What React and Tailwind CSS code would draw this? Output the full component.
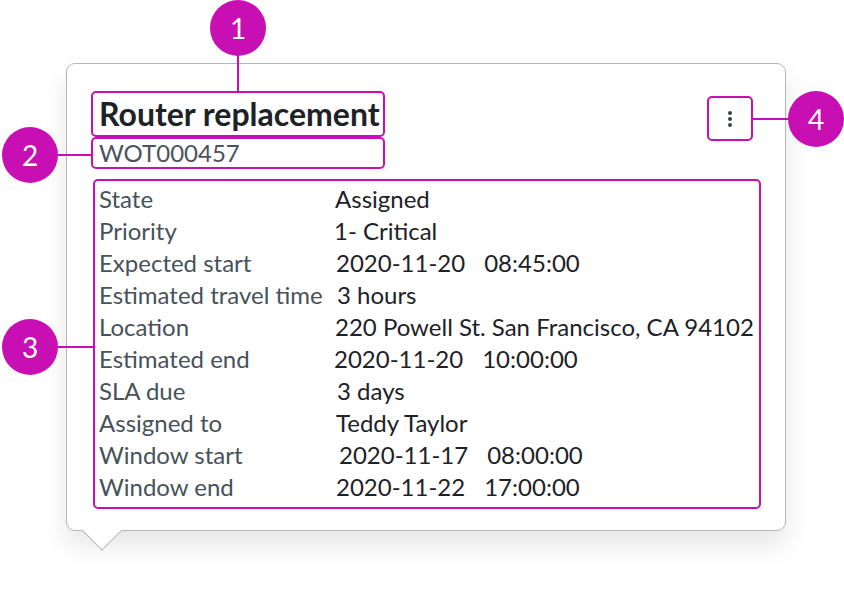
import React from 'react';

const ROWS = [
  ['State', 'Assigned', 'ml-0'],
  ['Priority', '1- Critical', 'ml-[-1px]'],
  ['Expected start', ['2020-11-20', '08:45:00'], 'ml-[1px]'],
  ['Estimated travel time', '3 hours', 'ml-[2px]'],
  ['Location', '220 Powell St. San Francisco, CA 94102', 'ml-0'],
  ['Estimated end', ['2020-11-20', '10:00:00'], 'ml-[-1px]'],
  ['SLA due', '3 days', 'ml-[2px]'],
  ['Assigned to', 'Teddy Taylor', 'ml-[1px]'],
  ['Window start', ['2020-11-17', '08:00:00'], 'ml-[4px]'],
  ['Window end', ['2020-11-22', '17:00:00'], 'ml-[1px]'],
];

function Callout({ n, className }) {
  return (
    <div
      className={`absolute w-[56px] h-[56px] rounded-full bg-[#c80fb4] text-white flex items-center justify-center text-[28px] leading-none ${className}`}
    >
      {n}
    </div>
  );
}

export default function App() {
  return (
    <div
      className="relative w-[844px] h-[592px] bg-white overflow-hidden"
      style={{ fontFamily: 'Lato, "Noto Sans", sans-serif' }}
    >
      {/* card */}
      <div className="absolute left-[66px] top-[63px] w-[720px] h-[468px]">
        <div className="relative w-full h-full bg-white border border-[#b3b8bc] rounded-[9px] shadow-[0_14px_26px_rgba(0,0,0,0.10)] pt-[27px] pl-[24px] pr-[32px]">
          {/* tail */}
          <div className="absolute left-[21px] bottom-[-15px] w-[28px] h-[28px] rotate-45 bg-white border-r border-b border-[#b3b8bc]" />

          <div className="relative flex justify-between items-start">
            <div className="flex flex-col w-[294px]">
              <div className="h-[46px] border-2 border-[#c80fb4] rounded-[5px] px-[6px] flex items-center">
                <span className="text-[32px] font-bold text-[#1d2226] leading-none whitespace-nowrap">Router replacement</span>
              </div>
              <div className="h-[32px] border-2 border-[#c80fb4] rounded-[5px] px-[6px] flex items-center">
                <span className="text-[24px] text-[#4a545c] leading-none">WOT000457</span>
              </div>
            </div>
            <div className="mt-[5px] w-[46px] h-[45px] border-2 border-[#c80fb4] rounded-[5px] flex flex-col items-center justify-center gap-[2px]">
              <span className="w-[4px] h-[4px] rounded-full bg-[#3b444b]" />
              <span className="w-[4px] h-[4px] rounded-full bg-[#3b444b]" />
              <span className="w-[4px] h-[4px] rounded-full bg-[#3b444b]" />
            </div>
          </div>

          <div className="relative ml-[2px] mt-[10px] w-[668px] h-[330px] border-2 border-[#c80fb4] rounded-[5px] pl-[4px] pt-[2px]">
            {ROWS.map(([label, value, off]) => (
              <div key={label} className="flex h-[32px] items-center text-[24px] whitespace-nowrap">
                <span className="w-[236px] text-[#47525a] shrink-0">{label}</span>
                {Array.isArray(value) ? (
                  <span className={`text-[#1d2226] flex gap-[19px] ${off}`}>
                    <span>{value[0]}</span>
                    <span>{value[1]}</span>
                  </span>
                ) : (
                  <span className={`text-[#1d2226] ${off}`}>{value}</span>
                )}
              </div>
            ))}
          </div>
        </div>
      </div>

      {/* callout lines */}
      <div className="absolute left-[237px] top-[50px] w-[2px] h-[42px] bg-[#c80fb4]" />
      <div className="absolute left-[50px] top-[154px] w-[42px] h-[2px] bg-[#c80fb4]" />
      <div className="absolute left-[50px] top-[346px] w-[44px] h-[2px] bg-[#c80fb4]" />
      <div className="absolute left-[752px] top-[118px] w-[40px] h-[2px] bg-[#c80fb4]" />

      <Callout n="1" className="left-[210px] top-[0px]" />
      <Callout n="2" className="left-[2px] top-[127px]" />
      <Callout n="3" className="left-[2px] top-[319px]" />
      <Callout n="4" className="left-[788px] top-[91px]" />
    </div>
  );
}
